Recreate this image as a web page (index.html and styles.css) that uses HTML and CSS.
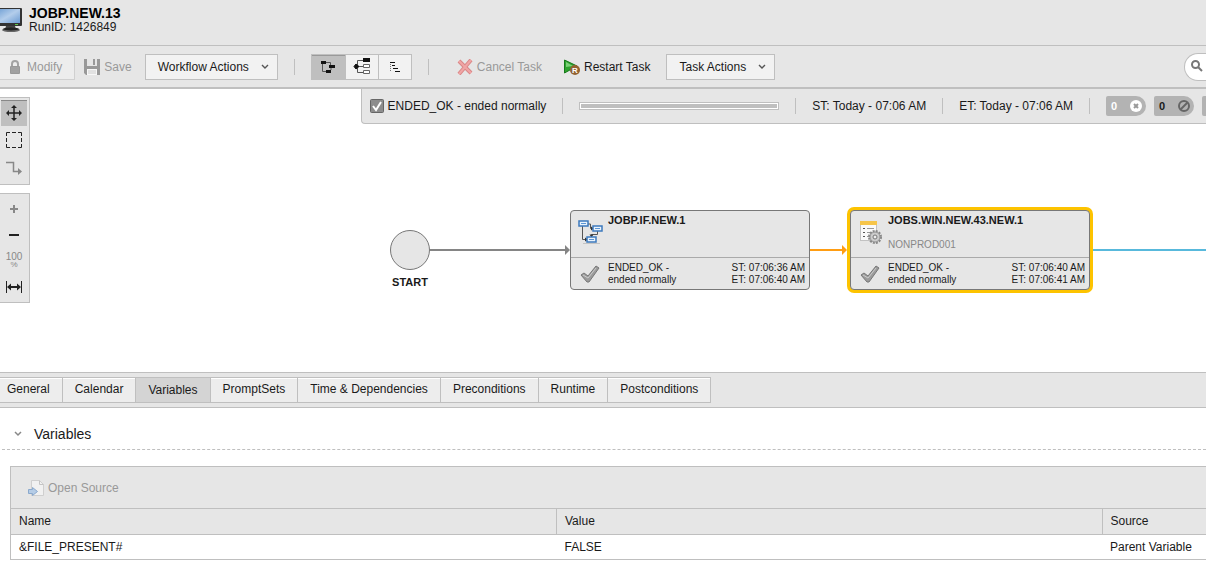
FILE: index.html
```html
<!DOCTYPE html>
<html lang="en">
<head>
  <meta charset="UTF-8">
  <meta name="viewport" content="width=device-width, initial-scale=1.0">
  <title>JOBP.NEW.13</title>
  <link rel="stylesheet" href="styles.css">
</head>
<body>
  <header class="header">
    <svg class="monitor" width="24" height="27" viewBox="0 0 24 27">
      <defs>
        <linearGradient id="screen" x1="0" y1="0" x2="1" y2="1">
          <stop offset="0" stop-color="#6f9fd4"/>
          <stop offset="0.5" stop-color="#b3cdeb"/>
          <stop offset="1" stop-color="#6c9bd2"/>
        </linearGradient>
      </defs>
      <rect x="-4" y="2" width="26" height="18" rx="1" fill="#333"/>
      <rect x="-3" y="3" width="23" height="14" fill="url(#screen)"/>
      <rect x="15" y="18" width="3" height="1" fill="#5fc54a"/>
      <path d="M6 20h9l1 3H5z" fill="#444"/>
      <ellipse cx="11" cy="24" rx="9" ry="2" fill="#666"/>
      <ellipse cx="11" cy="23" rx="8" ry="1.500" fill="#222"/>
    </svg>
    <div>
      <h1>JOBP.NEW.13</h1>
      <p>RunID: 1426849</p>
    </div>
  </header>

  <div class="toolbar">
    <button class="btn btn-modify" disabled>
      <svg width="12" height="16" viewBox="0 0 12 16">
        <path d="M3 8V5a3 3 0 0 1 6 0v3" fill="none" stroke="#a3a3a3" stroke-width="2"/>
        <rect x="1" y="7" width="10" height="8" rx="1" fill="#999"/>
        <path d="M2 9h8M2 11h8M2 13h8" stroke="#aaa"/>
      </svg>
      Modify
    </button>
    <button class="btn-plain btn-save" disabled>
      <svg width="16" height="16" viewBox="0 0 16 16">
        <path d="M0 0h16v16H2l-2-2z" fill="#999"/>
        <path d="M3 0h10v7H3z" fill="#e6e6e6"/>
        <path d="M9 0h2v6H9z" fill="#999"/>
        <path d="M3 10h10v6H3z" fill="#f7f7f7"/>
        <path d="M4 12h8M4 14h8" stroke="#ccc"/>
      </svg>
      Save
    </button>
    <button class="btn btn-menu">
      Workflow Actions
      <svg width="8" height="6" viewBox="0 0 8 6"><path d="M1 1l3 3 3-3" fill="none" stroke="#555" stroke-width="1.4"/></svg>
    </button>
    <span class="separator"></span>
    <div class="view-switch">
      <button class="active" aria-label="Graph view">
        <svg width="16" height="14" viewBox="0 0 16 14">
          <path d="M1 1h5v3H1zM9 5h6v3H9zM6 10h5v3H6z" fill="#111"/>
          <path d="M6 2.500h4.500V5M2.500 4v7.500H6M11 8v2" fill="none" stroke="#555"/>
        </svg>
      </button>
      <button aria-label="Tree view">
        <svg width="18" height="17" viewBox="0 0 18 17">
          <path d="M10 2.500H4.500v12H10M4 8.500h6" fill="none" stroke="#555"/>
          <path d="M10 0h7v4h-7z" fill="#111"/>
          <path d="M10.500 6.500h6v3h-6zM10.500 12.500h6v3h-6z" fill="#fff" stroke="#666"/>
          <path d="M3 6l3 2.500L3 11 1 8.500z" fill="#111" stroke="#111"/>
        </svg>
      </button>
      <button aria-label="Gantt view">
        <svg width="12" height="12" viewBox="0 0 12 12">
          <path d="M1.500 1v10" stroke="#777" stroke-dasharray="1 1"/>
          <path d="M1 1.500h5M3 4.500h3M4 7.500h5M6 10.500h5" stroke="#111"/>
        </svg>
      </button>
    </div>
    <span class="separator"></span>
    <button class="btn-plain btn-cancel" disabled>
      <svg width="16" height="16" viewBox="0 0 16 16">
        <path d="M2 2l12 12M14 1L2 15" stroke="#d98787" stroke-width="4"/>
        <path d="M2 2l12 12M14 1L2 15" stroke="#f0a5a5" stroke-width="2"/>
      </svg>
      Cancel Task
    </button>
    <button class="btn-plain btn-restart">
      <svg width="16" height="16" viewBox="0 0 16 16">
        <path d="M0.500 1v13L13 7z" fill="#2fa32f" stroke="#16791a"/>
        <path d="M2 3v5l7-1z" fill="#7bd177"/>
        <circle cx="11" cy="11" r="5" fill="#946331"/>
        <text class="badge-letter" x="11" y="14" text-anchor="middle">R</text>
      </svg>
      Restart Task
    </button>
    <button class="btn btn-menu">
      Task Actions
      <svg width="8" height="6" viewBox="0 0 8 6"><path d="M1 1l3 3 3-3" fill="none" stroke="#555" stroke-width="1.4"/></svg>
    </button>
    <button class="search" aria-label="Search">
      <svg width="12" height="12" viewBox="0 0 12 12">
        <circle cx="4.500" cy="4.500" r="3.500" fill="none" stroke="#777" stroke-width="2"/>
        <path d="M7 7l4 4" stroke="#777" stroke-width="2"/>
      </svg>
    </button>
  </div>

  <main class="canvas">
    <div class="status-bar">
      <svg width="14" height="14" viewBox="0 0 14 14">
        <rect x="0.500" y="0.500" width="13" height="13" rx="1" fill="#8d8d8d" stroke="#666"/>
        <path d="M3 7l3 4 5-8" fill="none" stroke="#fff" stroke-width="2"/>
      </svg>
      <span>ENDED_OK - ended normally</span>
      <span class="separator"></span>
      <div class="progress"></div>
      <span class="separator"></span>
      <span>ST: Today - 07:06 AM</span>
      <span class="separator"></span>
      <span>ET: Today - 07:06 AM</span>
      <span class="separator"></span>
      <div class="counters">
        <div class="counter light">
          <span>0</span>
          <svg width="12" height="12" viewBox="0 0 12 12">
            <circle cx="6" cy="6" r="6" fill="#fff"/>
            <path d="M4 4l4 4M8 4l-4 4" stroke="#999" stroke-width="2"/>
          </svg>
        </div>
        <div class="counter">
          <span>0</span>
          <svg width="12" height="12" viewBox="0 0 12 12">
            <circle cx="6" cy="6" r="5" fill="none" stroke="#666" stroke-width="2"/>
            <path d="M2.500 9.500l7-7" stroke="#666" stroke-width="2"/>
          </svg>
        </div>
        <div class="counter clipped"></div>
      </div>
    </div>

    <div class="palette palette-mode">
      <button class="active" aria-label="Move">
        <svg width="16" height="16" viewBox="0 0 16 16">
          <path d="M8 1v14M1 8h14" stroke="#222" stroke-width="1.5"/>
          <path d="M8 0l3 3H5zM8 16l3-3H5zM0 8l3-3v6zM16 8l-3-3v6z" fill="#222"/>
        </svg>
      </button>
      <button aria-label="Select">
        <svg width="16" height="16" viewBox="0 0 16 16">
          <path d="M0.500 4V0.500H4M6 .500h4M12 .500h3.500V4M15.500 6v4M15.500 12v3.500H12M10 15.500H6M4 15.500H.500V12M.500 10V6" fill="none" stroke="#222"/>
        </svg>
      </button>
      <button aria-label="Connect">
        <svg width="16" height="14" viewBox="0 0 16 14">
          <path d="M0 1.500h7.500v9H13" fill="none" stroke="#888" stroke-width="1.5"/>
          <path d="M12 7l4 3.500-4 3.500z" fill="#888"/>
        </svg>
      </button>
    </div>

    <div class="palette palette-zoom">
      <button aria-label="Zoom in">
        <svg width="8" height="8" viewBox="0 0 8 8"><path d="M0 4h8M4 0v8" stroke="#888" stroke-width="2"/></svg>
      </button>
      <button aria-label="Zoom out">
        <svg width="10" height="2" viewBox="0 0 10 2"><path d="M0 1h10" stroke="#222" stroke-width="2"/></svg>
      </button>
      <button class="zoom-reset">100<span>%</span></button>
      <button aria-label="Fit width">
        <svg width="16" height="12" viewBox="0 0 16 12">
          <path d="M.500 0v12M15.500 0v12" stroke="#222"/>
          <path d="M3 6h10" stroke="#222" stroke-width="2"/>
          <path d="M1 6l4-3.500v7zM15 6l-4-3.500v7z" fill="#222"/>
        </svg>
      </button>
    </div>

    <svg class="connectors">
      <path d="M430 161H565" stroke="#858585" stroke-width="2"/>
      <path d="M565 156l5 5-5 5z" fill="#858585"/>
      <path d="M810 161H842" stroke="#ff9d13" stroke-width="2"/>
      <path d="M842 156l5 5-5 5z" fill="#ff9d13"/>
      <line x1="1092" y1="161" x2="100%" y2="161" stroke="#58b9dc" stroke-width="2"/>
    </svg>

    <div class="start">
      <div class="start-circle"></div>
      START
    </div>

    <article class="node node-if">
      <div class="node-top">
        <svg width="26" height="26" viewBox="0 0 26 26">
          <path d="M9 4h3.500v4.500H15M4.500 6v13.500H9M19.500 11v3.500h-6V17" fill="none" stroke="#555"/>
          <path d="M7 17.500l3 2-3 2zM13 6.500l3 2-3 2zM11.500 14.500h4l-2 3z" fill="#333"/>
          <g fill="#e9f3fc" stroke="#3d79bd" stroke-width="1.5">
            <rect x="1" y="1" width="9" height="5"/>
            <rect x="15" y="6" width="9" height="5"/>
            <rect x="9" y="17" width="9" height="5"/>
          </g>
          <path d="M3 3.500h5M17 8.500h5M11 19.500h5" stroke="#5c96d6"/>
          <path d="M5 23.500h17" stroke="#c4c4c4"/>
        </svg>
        <h2>JOBP.IF.NEW.1</h2>
      </div>
      <div class="node-bottom">
        <svg width="20" height="18" viewBox="0 0 20 18">
          <path d="M1 10l3-2 4 3 8-10 3 2L9 17H7z" fill="#9b9b9b" stroke="#777"/>
          <path d="M3 10l5 3 8-10" fill="none" stroke="#ccc"/>
        </svg>
        <p>ENDED_OK -<br>ended normally</p>
        <p class="times">ST: 07:06:36 AM<br>ET: 07:06:40 AM</p>
      </div>
    </article>

    <article class="node node-job selected">
      <div class="node-top">
        <svg width="26" height="26" viewBox="0 0 26 26">
          <rect x="2.500" y="1.500" width="16" height="19" fill="#fafafa" stroke="#c2c2c2"/>
          <path d="M2 1h17v4H2z" fill="#f6c54a"/>
          <path d="M5 8.500h2M5 12.500h2M5 16.500h2" stroke="#555"/>
          <path d="M9 8.500h7M9 12.500h5M9 16.500h3" stroke="#999"/>
          <circle cx="17" cy="17" r="6" fill="none" stroke="#888" stroke-width="2" stroke-dasharray="2 1.14"/>
          <circle cx="17" cy="17" r="5" fill="#ccc" stroke="#909090"/>
          <circle cx="17" cy="17" r="2" fill="#eee" stroke="#777"/>
        </svg>
        <div>
          <h2>JOBS.WIN.NEW.43.NEW.1</h2>
          <p class="agent">NONPROD001</p>
        </div>
      </div>
      <div class="node-bottom">
        <svg width="20" height="18" viewBox="0 0 20 18">
          <path d="M1 10l3-2 4 3 8-10 3 2L9 17H7z" fill="#9b9b9b" stroke="#777"/>
          <path d="M3 10l5 3 8-10" fill="none" stroke="#ccc"/>
        </svg>
        <p>ENDED_OK -<br>ended normally</p>
        <p class="times">ST: 07:06:40 AM<br>ET: 07:06:41 AM</p>
      </div>
    </article>
  </main>

  <section class="details">
    <nav class="tabs">
      <button>General</button>
      <button>Calendar</button>
      <button class="active">Variables</button>
      <button>PromptSets</button>
      <button>Time &amp; Dependencies</button>
      <button>Preconditions</button>
      <button>Runtime</button>
      <button>Postconditions</button>
    </nav>

    <h3 class="section-title">
      <svg width="8" height="6" viewBox="0 0 8 6"><path d="M1 1l3 3 3-3" fill="none" stroke="#888" stroke-width="1.5"/></svg>
      Variables
    </h3>

    <div class="panel">
      <div class="panel-toolbar">
        <button class="btn-plain" disabled>
          <svg width="16" height="16" viewBox="0 0 16 16">
            <path d="M3.500.500h8l4 4v11h-12z" fill="#f1f1f1" stroke="#cfcfcf"/>
            <path d="M11.500.500v4h4" fill="none" stroke="#c4c4c4"/>
            <path d="M.500 9.500h4v-2l5 4-5 4v-2h-4z" fill="#b5cce6" stroke="#8aa9cd"/>
          </svg>
          Open Source
        </button>
      </div>
      <table>
        <thead>
          <tr><th>Name</th><th>Value</th><th class="col-source">Source</th></tr>
        </thead>
        <tbody>
          <tr><td>&amp;FILE_PRESENT#</td><td>FALSE</td><td>Parent Variable</td></tr>
        </tbody>
      </table>
    </div>
  </section>
</body>
</html>
```

FILE: styles.css
```css
* {
  margin: 0;
  padding: 0;
  box-sizing: border-box;
}

body {
  font-family: "Liberation Sans", Arial, sans-serif;
  font-size: 12px;
  line-height: 14px;
  color: #1a1a1a;
  background: #fff;
  display: flex;
  flex-direction: column;
  min-height: 100vh;
  overflow-x: hidden;
}

button {
  font: inherit;
  color: inherit;
  background: none;
  border: none;
  cursor: pointer;
}

button:disabled {
  color: #999;
  cursor: default;
}

svg {
  flex: none;
}

/* header */
.header {
  display: flex;
  gap: 5px;
  padding: 6px 0 11px;
  background: #e6e6e6;
  border-bottom: 1px solid #bfbfbf;
}

.header h1 {
  font-size: 14px;
  line-height: 14px;
  color: #000;
}

.monitor {
  margin-bottom: -2px;
}

/* toolbar */
.toolbar {
  display: flex;
  align-items: center;
  height: 43px;
  background: #e6e6e6;
  border-bottom: 2px solid #bfbfbf;
}

.btn,
.btn-plain {
  display: flex;
  align-items: center;
  gap: 4px;
  height: 26px;
  white-space: nowrap;
}

.btn {
  background: #f2f2f2;
  border: 1px solid #bfbfbf;
}

.btn-modify {
  gap: 6px;
  padding: 0 12px 0 9px;
  background: #ededed;
  border-color: #d0d0d0;
  border-left: none;
}

.btn-save {
  margin: 0 13px 0 9px;
}

.btn-menu {
  gap: 12px;
  padding: 0 8px 0 12px;
}

.separator {
  width: 1px;
  height: 16px;
  margin: 0 16px;
  background: #bfbfbf;
}

.view-switch {
  display: flex;
  border: 1px solid #bfbfbf;
}

.view-switch button {
  display: flex;
  align-items: center;
  justify-content: center;
  width: 33px;
  height: 24px;
  background: #f2f2f2;
}

.view-switch button + button {
  border-left: 1px solid #bfbfbf;
}

.view-switch .active {
  background: #bfbfbf;
  box-shadow: inset 0 1px #999;
}

.btn-cancel {
  margin-left: 12px;
}

.btn-restart {
  margin: 0 16px 0 22px;
}

.badge-letter {
  font-size: 8px;
  font-weight: bold;
  fill: #fff;
}

.search {
  width: 22px;
  height: 28px;
  margin-left: auto;
  padding: 0 0 2px 6px;
  display: flex;
  align-items: center;
  background: #fff;
  border: 1px solid #bfbfbf;
  border-right: none;
  border-radius: 14px 0 0 14px;
}

/* canvas */
.canvas {
  position: relative;
  flex: 1;
  min-height: 240px;
  overflow: hidden;
}

.status-bar {
  display: flex;
  align-items: center;
  width: max-content;
  height: 35px;
  margin-left: auto;
  padding-left: 8px;
  background: #e6e6e6;
  border: 1px solid #bfbfbf;
  border-width: 0 0 1px 1px;
  border-radius: 0 0 0 4px;
}

.status-bar > svg {
  margin-right: 4px;
}

.progress {
  width: 200px;
  height: 8px;
  background: #bfbfbf;
  border: 1px solid #bfbfbf;
  box-shadow: inset 0 0 0 1px #fff;
}

.counters {
  display: flex;
  gap: 8px;
}

.counter {
  display: flex;
  align-items: center;
  justify-content: space-between;
  width: 40px;
  height: 20px;
  padding: 0 4px 0 5px;
  font-size: 11px;
  font-weight: bold;
  background: #b3b3b3;
  border-radius: 2px 10px 10px 2px;
}

.counter.light {
  color: #fff;
}

.counter.clipped {
  width: 4px;
  padding: 0;
  border-radius: 2px 0 0 2px;
}

.palette {
  position: absolute;
  left: 0;
  width: 30px;
  padding: 2px 2px 2px 1px;
  background: #e6e6e6;
  border: 1px solid #bfbfbf;
  border-left: none;
}

.palette-mode {
  top: 8px;
}

.palette-zoom {
  top: 104px;
}

.palette button {
  display: flex;
  flex-direction: column;
  align-items: center;
  justify-content: center;
  width: 26px;
  height: 26px;
}

.palette-mode button {
  height: 28px;
}

.palette .active {
  height: 26px;
  background: #bfbfbf;
  box-shadow: inset 0 1px #888;
}

.palette .zoom-reset {
  font-size: 10px;
  line-height: 8px;
  color: #888;
}

.zoom-reset span {
  font-size: 8px;
}

.connectors {
  position: absolute;
  top: 0;
  left: 0;
  width: 100%;
  height: 100%;
  pointer-events: none;
}

.start {
  position: absolute;
  left: 390px;
  top: 141px;
  width: 40px;
  font-size: 11px;
  font-weight: bold;
  display: flex;
  flex-direction: column;
  align-items: center;
  gap: 5px;
}

.start-circle {
  width: 40px;
  height: 40px;
  background: #e6e6e6;
  border: 1px solid #777;
  border-radius: 50%;
}

.node {
  position: absolute;
  top: 121px;
  width: 240px;
  background: #e6e6e6;
  border: 1px solid #777;
  border-radius: 4px;
}

.node-if {
  left: 570px;
}

.node-job {
  left: 850px;
}

.node.selected {
  box-shadow: 0 0 0 3px #fdc300;
}

.node-top {
  display: flex;
  gap: 4px;
  height: 47px;
  padding: 2px 0 0 7px;
  border-bottom: 1px solid #aaa;
}

.node-top > svg {
  margin-top: 7px;
}

.node h2 {
  font-size: 11px;
  line-height: 14px;
}

.agent {
  margin-top: 11px;
  font-size: 10px;
  color: #888;
}

.node-bottom {
  display: flex;
  gap: 8px;
  padding: 4px 4px 3px 9px;
  font-size: 10px;
  line-height: 12px;
}

.node-bottom svg {
  margin-top: 3px;
}

.times {
  margin-left: auto;
  text-align: right;
}

/* details */
.tabs {
  display: flex;
  padding: 4px 0;
  background: #e6e6e6;
  border-top: 1px solid #bfbfbf;
  border-bottom: 1px solid #bfbfbf;
}

.tabs button {
  height: 26px;
  padding: 0 12px 2px;
  background: #ededed;
  border: 1px solid #bfbfbf;
  border-left: none;
  box-shadow: inset 0 1px #fff;
}

.tabs button:first-child {
  padding-left: 7px;
}

.tabs .active {
  padding-bottom: 0;
  background: #d4d4d4;
  box-shadow: none;
}

.section-title {
  display: flex;
  align-items: center;
  gap: 12px;
  margin: 0 0 16px 2px;
  padding: 18px 12px 7px;
  font-size: 14px;
  font-weight: normal;
  line-height: 16px;
  border-bottom: 1px dashed #bfbfbf;
}

.panel {
  margin: 0 0 16px 10px;
  border: 1px solid #bfbfbf;
  border-width: 1px 0 1px 1px;
}

.panel-toolbar {
  padding: 8px 17px 7px;
  background: #e6e6e6;
}

table {
  width: 100%;
  table-layout: fixed;
  border-collapse: collapse;
}

th,
td {
  padding: 5px 8px 6px;
  font-weight: normal;
  text-align: left;
  white-space: nowrap;
}

td {
  padding-bottom: 5px;
}

th {
  background: #e6e6e6;
  border: 1px solid #bfbfbf;
  border-width: 1px 0;
}

th + th {
  border-left-width: 1px;
}

.col-source {
  width: 104px;
}
```
